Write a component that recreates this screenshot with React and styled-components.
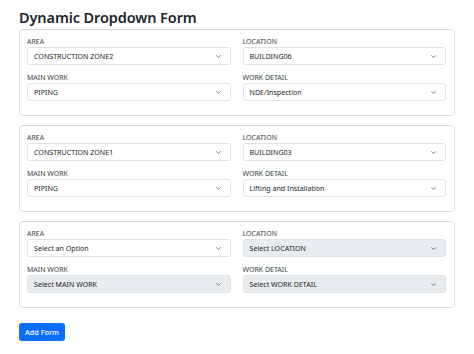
import React from 'react';
import styled, { createGlobalStyle } from 'styled-components';

const GlobalStyle = createGlobalStyle`
  body {
    margin: 0;
    background: #fff;
    font-family: "Noto Sans", "Open Sans", sans-serif;
    color: #212529;
  }
`;

const Page = styled.div`
  padding: 9px 19px 12px 19px;
  width: 436px;
`;

const Title = styled.h1`
  margin: 0 0 3px 0;
  font-size: 14.5px;
  font-weight: 600;
  line-height: 17px;
  color: #212529;
  letter-spacing: -0.1px;
`;

const Card = styled.div`
  border: 1px solid #d9dcdf;
  border-radius: 4px;
  padding: 7px 8px 6px 7px;
  margin-bottom: ${(p) => (p.last ? '15px' : '9px')};
  display: grid;
  grid-template-columns: 1fr 1fr;
  column-gap: 12px;
`;

const Group = styled.div`
  display: flex;
  flex-direction: column;
  margin-bottom: 8px;
`;

const Label = styled.label`
  font-size: 7px;
  line-height: 10px;
  color: #3a3f44;
  text-transform: uppercase;
`;

const SelectBox = styled.div`
  height: 18px;
  box-sizing: border-box;
  border: 1px solid #dee2e6;
  border-radius: 3px;
  background: ${(p) => (p.disabled ? '#e9ecef' : '#fff')};
  display: flex;
  align-items: center;
  justify-content: space-between;
  padding: 0 8px 0 6px;
  font-size: 7.1px;
  color: #212529;
`;

const Chevron = () => (
  <svg width="7" height="5" viewBox="0 0 16 16">
    <path d="M2 5l6 6 6-6" fill="none" stroke="#343a40" strokeWidth="2" strokeLinecap="round" strokeLinejoin="round" />
  </svg>
);

const Button = styled.button`
  display: block;
  background: #0d6efd;
  color: #fff;
  border: none;
  border-radius: 3px;
  font-family: inherit;
  font-size: 7.3px;
  font-weight: 500;
  height: 18px;
  padding: 0 6px;
  cursor: pointer;
`;

function Select({ value, disabled }) {
  return (
    <SelectBox disabled={disabled}>
      <span>{value}</span>
      <Chevron />
    </SelectBox>
  );
}

const forms = [
  { area: 'CONSTRUCTION ZONE2', location: 'BUILDING06', main: 'PIPING', detail: 'NDE/Inspection' },
  { area: 'CONSTRUCTION ZONE1', location: 'BUILDING03', main: 'PIPING', detail: 'Lifting and Installation' },
  { area: 'Select an Option', location: 'Select LOCATION', main: 'Select MAIN WORK', detail: 'Select WORK DETAIL', empty: true },
];

export default function App() {
  return (
    <Page>
      <GlobalStyle />
      <Title>Dynamic Dropdown Form</Title>
      {forms.map((f, i) => (
        <Card key={i} last={i === forms.length - 1}>
          <Group>
            <Label>Area</Label>
            <Select value={f.area} />
          </Group>
          <Group>
            <Label>Location</Label>
            <Select value={f.location} disabled={f.empty} />
          </Group>
          <Group>
            <Label>Main Work</Label>
            <Select value={f.main} disabled={f.empty} />
          </Group>
          <Group>
            <Label>Work Detail</Label>
            <Select value={f.detail} disabled={f.empty} />
          </Group>
        </Card>
      ))}
      <Button>Add Form</Button>
    </Page>
  );
}
